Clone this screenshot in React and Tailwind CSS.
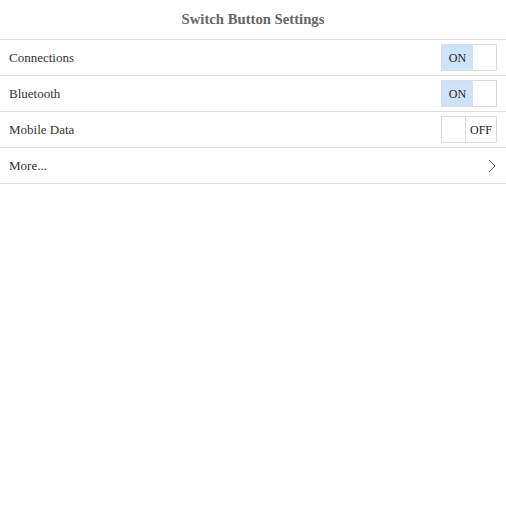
import React, { useState } from 'react';

const Switch = ({ on, onToggle }) => {
    return (
        <button
            onClick={onToggle}
            className="flex h-[27px] w-[56px] border border-[#dcdcdc] bg-white text-[12px] text-[#222]"
        >
            {on ? (
                <>
                    <span className="flex h-full w-[31px] items-center justify-center bg-[#cfe3f8]">ON</span>
                    <span className="flex-1"></span>
                </>
            ) : (
                <>
                    <span className="h-full w-[24px] border-r border-[#dcdcdc]"></span>
                    <span className="flex flex-1 items-center justify-center">OFF</span>
                </>
            )}
        </button>
    );
};

const Row = ({ label, children }) => (
    <div className="flex h-[36px] items-center justify-between border-b border-[#dedede] px-[9px]">
        <span className="text-[13px] text-[#333]">{label}</span>
        {children}
    </div>
);

export default function App() {
    const [state, setState] = useState({ connections: true, bluetooth: true, mobile: false });
    const toggle = (k) => setState((s) => ({ ...s, [k]: !s[k] }));

    return (
        <div className="min-h-[530px] w-full bg-white font-['Liberation_Serif',serif]">
            <h1 className="flex h-[40px] items-center justify-center border-b border-[#dedede] text-[14.7px] font-bold text-[#666]">
                Switch Button Settings
            </h1>
            <Row label="Connections">
                <Switch on={state.connections} onToggle={() => toggle('connections')} />
            </Row>
            <Row label="Bluetooth">
                <Switch on={state.bluetooth} onToggle={() => toggle('bluetooth')} />
            </Row>
            <Row label="Mobile Data">
                <Switch on={state.mobile} onToggle={() => toggle('mobile')} />
            </Row>
            <Row label="More...">
                <svg width="8" height="14" viewBox="0 0 8 14" className="mr-[1px]">
                    <path d="M1 1 L7 7 L1 13" fill="none" stroke="#666" strokeWidth="1" />
                </svg>
            </Row>
        </div>
    );
}
